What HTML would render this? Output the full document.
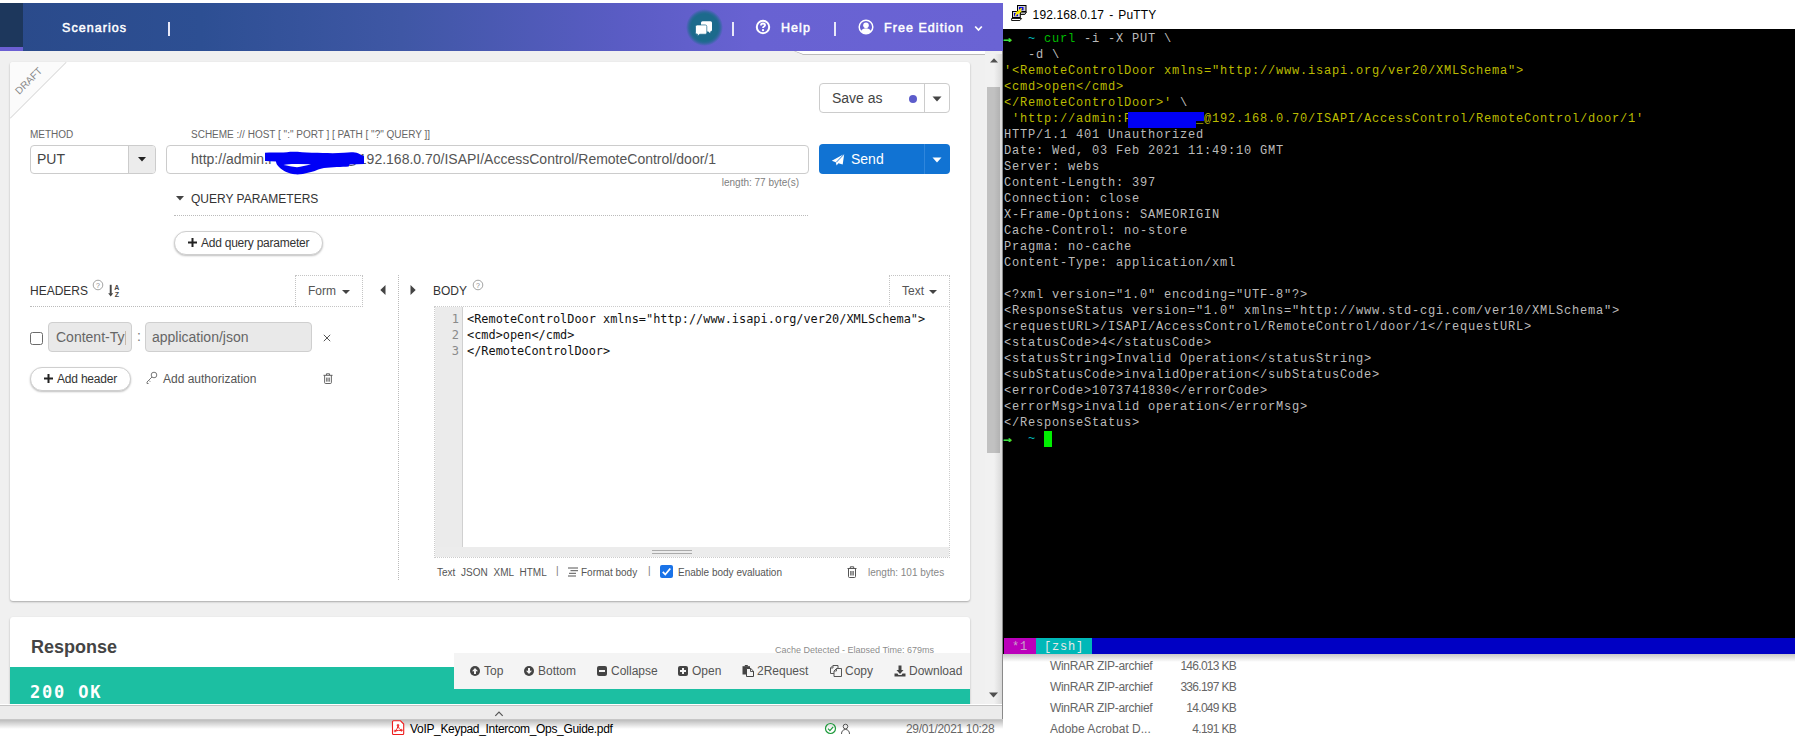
<!DOCTYPE html>
<html lang="en">
<head>
<meta charset="utf-8">
<title>192.168.0.17 - PuTTY</title>
<style>
*{box-sizing:border-box;margin:0;padding:0}
html,body{width:1795px;height:738px;overflow:hidden;background:#fff}
body{position:relative;font-family:"Liberation Sans",Arial,sans-serif;color:#333}
.abs{position:absolute}
.t{position:absolute;white-space:nowrap;line-height:1}
/* ---------- browser window (left) ---------- */
#win{position:absolute;left:0;top:0;width:1003px;height:704px;background:#f0f0f0;overflow:hidden}
#hdr{position:absolute;left:0;top:3px;width:1003px;height:48px;background:linear-gradient(90deg,#2a4a8a 0%,#2d4f93 20%,#3f57a5 40%,#5a5cc4 62%,#6862d2 75%,#6a63d4 100%)}
#hdr .dark{position:absolute;left:0;top:0;width:23px;height:44px;background:#1d375c}
#hdr .strip{position:absolute;left:0;top:44px;width:23px;height:4px;background:#6b5fd3}
#hdr .t{color:#fff;font-weight:normal;-webkit-text-stroke:.5px #fff;font-size:12.500px;letter-spacing:1.050px}
.card{position:absolute;background:#fff;border-radius:3px;box-shadow:0 1px 2px rgba(0,0,0,.3)}
.lbl{color:#666;font-size:10px}
.inp{position:absolute;border:1px solid #ccc;border-radius:4px;background:#fff}
.pill{position:absolute;border:1px solid #cfcfcf;border-radius:13px;background:#fff;box-shadow:0 1px 2px rgba(0,0,0,.25)}
.dot-h{position:absolute;height:0;border-top:1px dotted #bbb}
.dot-v{position:absolute;width:0;border-left:1px dotted #bbb}
.mono{font-family:"DejaVu Sans Mono","Liberation Mono",monospace}
/* ---------- putty ---------- */
#putty{position:absolute;left:1003px;top:0;width:792px;height:654px;background:#fff}
#term{position:absolute;left:0;top:29px;width:792px;height:625px;background:#000}
#term pre{position:absolute;left:1px;top:2.3px;font-family:"Liberation Mono","DejaVu Sans Mono",monospace;font-size:12px;letter-spacing:.8px;line-height:16px;color:#bbb;white-space:pre}
.y{color:#bbbb00}.g{color:#00bb00}.c{color:#00bbbb}.bg{color:#3fe03f;font-weight:bold;-webkit-text-stroke:.9px #3fe03f}
/* ---------- explorer ---------- */
.ex{font-family:"Liberation Sans","DejaVu Sans",sans-serif;font-size:12px;color:#666;letter-spacing:-.32px;margin-top:1px}
</style>
</head>
<body>

<!-- ================= file explorer background (bottom) ================= -->
<div class="abs" style="left:0;top:704px;width:1003px;height:16px;background:#ebebeb;border-top:1px solid #fff;border-bottom:1px solid #c6c6c6"></div><div class="abs" style="left:0;top:705px;width:1003px;height:1px;background:#c4c4c4"></div>
<div class="abs" style="left:0;top:720px;width:1003px;height:9px;background:linear-gradient(180deg,rgba(0,0,0,.26),rgba(0,0,0,0))"></div>
<svg class="abs" style="left:494px;top:710px" width="10" height="7" viewBox="0 0 10 7"><path d="M1.3 5.8 L5 2 L8.7 5.8" fill="none" stroke="#555" stroke-width="1.2"/></svg>

<svg class="abs" style="left:391px;top:720px" width="14" height="16" viewBox="0 0 14 16"><path d="M2.5 .8h7l3.2 3.200v9.500a1 1 0 0 1 -1 1h-9.200a1 1 0 0 1 -1-1v-11.700a1 1 0 0 1 1-1z" fill="#fff" stroke="#ee1c1c" stroke-width="1.1"/><path d="M4.3 11c1.600-1.400 2.500-3.700 2.700-5.800.3 2.400 1.700 4.500 3.800 5.200-2.400-.2-4.500 0-6.500.6z" fill="none" stroke="#ee1c1c" stroke-width="1"/><circle cx="7" cy="5.2" r=".9" fill="none" stroke="#ee1c1c" stroke-width=".8"/><circle cx="4" cy="11" r=".9" fill="none" stroke="#ee1c1c" stroke-width=".8"/><circle cx="10.5" cy="10.3" r=".9" fill="none" stroke="#ee1c1c" stroke-width=".8"/></svg>
<div class="t ex" style="left:410px;top:722px;color:#000">VoIP_Keypad_Intercom_Ops_Guide.pdf</div>
<svg class="abs" style="left:824px;top:722px" width="28" height="13" viewBox="0 0 28 13"><circle cx="6.500" cy="6.500" r="5" fill="none" stroke="#1e9a3c" stroke-width="1.2"/><path d="M4 6.700l1.900 1.900 3.300-3.800" fill="none" stroke="#1e9a3c" stroke-width="1.200"/><circle cx="21.500" cy="4.500" r="2.300" fill="none" stroke="#555" stroke-width="1"/><path d="M17.500 12c0-3 1.700-4.500 4-4.500s4 1.500 4 4.500" fill="none" stroke="#555" stroke-width="1"/></svg>
<div class="t ex" style="left:906px;top:722px">29/01/2021 10:28</div>

<div class="abs" style="left:1003px;top:654px;width:792px;height:8px;background:linear-gradient(180deg,rgba(0,0,0,.22),rgba(0,0,0,0))"></div>
<div class="t ex" style="left:1050px;top:659px">WinRAR ZIP-archief</div>
<div class="t ex" style="right:559px;top:659px;letter-spacing:-.71px">146.013 KB</div>
<div class="t ex" style="left:1050px;top:680px">WinRAR ZIP-archief</div>
<div class="t ex" style="right:559px;top:680px;letter-spacing:-.71px">336.197 KB</div>
<div class="t ex" style="left:1050px;top:701px">WinRAR ZIP-archief</div>
<div class="t ex" style="right:559px;top:701px;letter-spacing:-.71px">14.049 KB</div>
<div class="t ex" style="left:1050px;top:722px;letter-spacing:0">Adobe Acrobat D...</div>
<div class="t ex" style="right:559px;top:722px;letter-spacing:-.71px">4.191 KB</div>

<!-- ================= browser window ================= -->
<div id="win">
  <div class="abs" style="left:0;top:0;width:1003px;height:3px;background:#fff"></div>
  <div id="hdr">
    <div class="dark"></div><div class="strip"></div>
    <div class="t" style="left:62px;top:18.700px">Scenarios</div>
    <div class="abs" style="left:168px;top:19px;width:1.500px;height:14px;background:#e8e8f8"></div>
    <div class="abs" style="left:686px;top:6px;width:37px;height:37px;border-radius:50%;background:radial-gradient(circle closest-side,#1c6a8c 0,#1c6a8c 74%,rgba(28,106,140,.75) 84%,rgba(28,106,140,0) 100%)"></div>
    <svg class="abs" style="left:695px;top:17.5px" width="18" height="16" viewBox="0 0 18 15" preserveAspectRatio="none"><path d="M7.500 .2h8a1.500 1.500 0 0 1 1.500 1.500v6.600a1.500 1.500 0 0 1 -1.500 1.500h-.3v1.700l-1.900-1.700H7.500A1.500 1.500 0 0 1 6 8.300V1.700A1.500 1.500 0 0 1 7.500 .2z" fill="#fff"/><path d="M2 3.700h8.300a1.500 1.500 0 0 1 1.500 1.500v5.700a1.500 1.500 0 0 1 -1.500 1.500H4.600L2.600 14.300V12.400H2A1.500 1.500 0 0 1 .5 10.900V5.200A1.500 1.500 0 0 1 2 3.700z" fill="#fff" stroke="#1c6a8c" stroke-width=".7"/></svg>
    <div class="abs" style="left:732px;top:19px;width:1.500px;height:14px;background:#e8e8f8"></div>
    <svg class="abs" style="left:755px;top:16px" width="16" height="16" viewBox="0 0 16 16"><circle cx="8" cy="8" r="6.200" fill="none" stroke="#fff" stroke-width="2"/><path d="M6 6.500c0-1.300.9-2 2-2s2 .7 2 1.700c0 1.300-2 1.300-2 2.700" fill="none" stroke="#fff" stroke-width="1.900"/><circle cx="8" cy="11.200" r="1.150" fill="#fff"/></svg>
    <div class="t" style="left:781px;top:18.700px">Help</div>
    <div class="abs" style="left:834px;top:19px;width:1.500px;height:14px;background:#e8e8f8"></div>
    <svg class="abs" style="left:858px;top:16px" width="16" height="16" viewBox="0 0 16 16"><circle cx="8" cy="8" r="6.800" fill="none" stroke="#fff" stroke-width="1.500"/><circle cx="8" cy="6.300" r="2.800" fill="#fff"/><path d="M2.800 12.500c1-2.500 3-3.300 5.200-3.300s4.200.8 5.200 3.300c-1.500 1.700-3.200 2.300-5.200 2.300s-3.700-.6-5.200-2.300z" fill="#fff"/></svg>
    <div class="t" style="left:884px;top:18.700px">Free Edition</div>
    <svg class="abs" style="left:974px;top:22px" width="9" height="7" viewBox="0 0 9 7"><path d="M1.200 1.500L4.500 5 7.800 1.500" fill="none" stroke="#fff" stroke-width="1.800"/></svg>
  </div>
  <!-- white tab stub below header -->
  <svg class="abs" style="left:794px;top:51px" width="196" height="5" viewBox="0 0 196 5"><path d="M0 0H191V3.800H9z" fill="#aaa"/><path d="M1 0H191V3H9z" fill="#fff"/></svg>

  <!-- scrollbar -->
  <div class="abs" style="left:985px;top:54px;width:17px;height:650px;background:#f1f1f1"></div>
  <div class="abs" style="left:987px;top:87px;width:13px;height:366px;background:#c1c1c1"></div>
  <svg class="abs" style="left:990px;top:58px" width="8" height="5" viewBox="0 0 8 5"><path d="M0 4.500L4 .3 8 4.500z" fill="#505050"/></svg>
  <svg class="abs" style="left:989px;top:692px" width="9" height="6" viewBox="0 0 9 6"><path d="M0 .5L4.500 5.500 9 .5z" fill="#505050"/></svg>

  <!-- ========== request card ========== -->
  <div class="card" style="left:10px;top:62px;width:960px;height:539px;overflow:hidden">
    <!-- DRAFT ribbon -->
    <svg class="abs" style="left:0;top:0" width="60" height="60" viewBox="0 0 60 60"><path d="M0 56 L56 0" stroke="#cfcfcf" stroke-width="1.500" fill="none"/><path d="M0 0H56L0 56z" fill="#fbfbfb"/></svg>
    <div class="t" style="left:-1px;top:14px;width:40px;text-align:center;font-size:10px;color:#888;transform:rotate(-45deg);transform-origin:50% 50%">DRAFT</div>
  </div>

  <!-- Save as -->
  <div class="inp" style="left:819px;top:83px;width:131px;height:30px;border-color:#ccc"></div>
  <div class="abs" style="left:924px;top:83px;width:1px;height:30px;background:#ccc"></div>
  <div class="t" style="left:832px;top:91px;font-size:14px;color:#444">Save as</div>
  <div class="abs" style="left:909px;top:95px;width:8px;height:8px;border-radius:50%;background:#5c5ccb"></div>
  <svg class="abs" style="left:932px;top:96px" width="10" height="6" viewBox="0 0 10 6"><path d="M.5 .5h9L5 5.500z" fill="#444"/></svg>

  <!-- method -->
  <div class="t lbl" style="left:30px;top:129.5px">METHOD</div>
  <div class="inp" style="left:30px;top:145px;width:126px;height:29px"></div>
  <div class="abs" style="left:128px;top:146px;width:27px;height:27px;background:#ececec;border-left:1px solid #ccc;border-radius:0 3px 3px 0"></div>
  <div class="t" style="left:37px;top:152px;font-size:14px;color:#444">PUT</div>
  <svg class="abs" style="left:138px;top:157px" width="8" height="5" viewBox="0 0 8 5"><path d="M0 0h8L4 4.500z" fill="#222"/></svg>

  <!-- URL -->
  <div class="t lbl" style="left:191px;top:129.5px">SCHEME :// HOST [ ":" PORT ] [ PATH [ "?" QUERY ]]</div>
  <div class="inp" style="left:166px;top:145px;width:643px;height:29px"></div>
  <div class="t" style="left:191px;top:152px;font-size:14px;color:#555">http://admin:P</div>
  <div class="t" id="url2" style="left:344.600px;top:152px;font-size:14px;color:#555">@192.168.0.70/ISAPI/AccessControl/RemoteControl/door/1</div>
  <svg class="abs" style="left:260px;top:148px" width="112" height="30" viewBox="0 0 112 30"><path d="M5 4.800 C14 4.200 20 5 27 4.300 C34 3.200 42 4.500 52 4.800 C64 5 74 5.600 84 4.800 C90 3.800 95 4 98 5.200 L104 8.200 L104 16 L89.500 16.400 L88.700 18.600 C82 19 72 19.200 64 20 C58 21 55 23.500 49 24.500 C44 26 39 26.600 35 26.300 C29 25.800 23 23 19 19 C17 17 16 15.500 16 13.600 L5 13z" fill="#0000f6"/><path d="M23.500 17 C28 15.800 34 16 38 16 L51 16.300 C46 17.500 41 18.800 37 19.300 C32 18.600 28 17.800 23.500 17z" fill="#fff"/></svg>

  <!-- Send -->
  <div class="abs" style="left:819px;top:144px;width:131px;height:30px;border-radius:4px;background:#1173d3"></div>
  <div class="abs" style="left:924px;top:144px;width:1px;height:30px;background:#2f86dc"></div>
  <svg class="abs" style="left:831px;top:152px" width="14" height="14" viewBox="0 0 14 14"><path d="M13.200 2L.8 8.700 4.800 10.200 5.600 13.400 7.400 11.200 11.700 12.600z" fill="#fff"/><path d="M13.200 2L5.200 10.400" stroke="#1173d3" stroke-width=".9"/></svg>
  <div class="t" style="left:851px;top:152px;font-size:14px;color:#fff">Send</div>
  <svg class="abs" style="left:932px;top:157px" width="10" height="6" viewBox="0 0 10 6"><path d="M.5 .5h9L5 5.500z" fill="#fff"/></svg>

  <div class="t" style="right:204px;top:178px;font-size:10px;color:#808080">length: 77 byte(s)</div>

  <!-- query parameters -->
  <svg class="abs" style="left:176px;top:196px" width="8" height="5" viewBox="0 0 8 5"><path d="M0 0h8L4 4.500z" fill="#444"/></svg>
  <div class="t" style="left:191px;top:193px;font-size:12px;color:#333">QUERY PARAMETERS</div>
  <div class="dot-h" style="left:174px;top:215px;width:634px"></div>
  <div class="pill" style="left:174px;top:231px;width:149px;height:24px"></div>
  <svg class="abs" style="left:188px;top:238px" width="9" height="9" viewBox="0 0 9 9"><path d="M4.500 0v9M0 4.500h9" stroke="#222" stroke-width="2"/></svg>
  <div class="t" style="left:201px;top:237px;font-size:12px;color:#333;letter-spacing:-.24px">Add query parameter</div>

  <!-- headers -->
  <div class="t" style="left:30px;top:285px;font-size:12px;color:#333">HEADERS</div>
  <svg class="abs" style="left:92px;top:279px" width="12" height="12" viewBox="0 0 12 12"><circle cx="6" cy="6" r="4.800" fill="none" stroke="#999" stroke-width=".9"/><text x="6" y="8.600" font-size="7" text-anchor="middle" fill="#888" font-family="Liberation Sans, sans-serif">?</text></svg>
  <svg class="abs" style="left:108px;top:284px" width="12" height="14" viewBox="0 0 12 14"><path d="M2.700 .8v9" stroke="#444" stroke-width="1.900" fill="none"/><path d="M.2 9.200h5L2.700 12.500z" fill="#444"/><text x="8.800" y="5.800" font-size="7" text-anchor="middle" fill="#444" font-weight="bold" font-family="Liberation Sans, sans-serif">A</text><text x="8.800" y="12.800" font-size="7" text-anchor="middle" fill="#444" font-weight="bold" font-family="Liberation Sans, sans-serif">Z</text></svg>
  <div class="abs" style="left:295px;top:275px;width:68px;height:32px;border:1px dotted #c4c4c4"></div>
  <div class="t" style="left:308px;top:285px;font-size:12px;color:#555">Form</div>
  <svg class="abs" style="left:342px;top:290px" width="8" height="4" viewBox="0 0 8 4"><path d="M0 0h8L4 4z" fill="#444"/></svg>
  <div class="dot-h" style="left:30px;top:306px;width:266px"></div>

  <div class="abs" style="left:30px;top:332px;width:13px;height:13px;border:1px solid #6b6b6b;border-radius:2.500px;background:#fff"></div>
  <div class="inp" style="left:48px;top:322px;width:84px;height:30px;background:#e9e9e9;border-color:#cfcfcf"></div>
  <div class="t" style="left:56px;top:330px;font-size:14px;color:#666">Content-Ty</div>
  <div class="abs" style="left:125px;top:331px;width:1px;height:14px;background:#c9b9a9"></div>
  <div class="t" style="left:137px;top:329px;font-size:14px;color:#777">:</div>
  <div class="inp" style="left:145px;top:322px;width:167px;height:30px;background:#e9e9e9;border-color:#cfcfcf"></div>
  <div class="t" style="left:152px;top:330px;font-size:14px;color:#666">application/json</div>
  <svg class="abs" style="left:323px;top:334px" width="8" height="8" viewBox="0 0 8 8"><path d="M.8 .8l6.400 6.400M7.200 .8L.8 7.200" stroke="#555" stroke-width="1"/></svg>

  <div class="pill" style="left:30px;top:367px;width:101px;height:24px"></div>
  <svg class="abs" style="left:44px;top:374px" width="9" height="9" viewBox="0 0 9 9"><path d="M4.500 0v9M0 4.500h9" stroke="#222" stroke-width="2"/></svg>
  <div class="t" style="left:57px;top:373px;font-size:12px;color:#333;letter-spacing:-.2px">Add header</div>
  <svg class="abs" style="left:146px;top:371px" width="12" height="13" viewBox="0 0 12 13"><circle cx="8" cy="4" r="2.800" fill="none" stroke="#777" stroke-width="1"/><path d="M6 6L1 11v1.500h1.500M3 9.500l1.200 1.200" fill="none" stroke="#777" stroke-width="1"/></svg>
  <div class="t" style="left:163px;top:373px;font-size:12px;color:#555">Add authorization</div>
  <svg class="abs" style="left:322.5px;top:373px" width="10" height="11" viewBox="0 0 11 12"><path d="M.5 2.500h10M3.800 2.300V.8h3.400v1.500M1.800 2.500v8a1 1 0 0 0 1 1h5.400a1 1 0 0 0 1-1v-8" fill="none" stroke="#555" stroke-width="1"/><path d="M4 5v4.500M5.500 5v4.500M7 5v4.500" stroke="#555" stroke-width=".9"/></svg>

  <!-- splitter -->
  <svg class="abs" style="left:380px;top:285px" width="6" height="10" viewBox="0 0 6 10"><path d="M5.500 0v10L.3 5z" fill="#444"/></svg>
  <div class="dot-v" style="left:398px;top:275px;height:305px"></div>
  <svg class="abs" style="left:410px;top:285px" width="6" height="10" viewBox="0 0 6 10"><path d="M.5 0v10L5.700 5z" fill="#444"/></svg>

  <!-- body -->
  <div class="t" style="left:433px;top:285px;font-size:12px;color:#333">BODY</div>
  <svg class="abs" style="left:472px;top:279px" width="12" height="12" viewBox="0 0 12 12"><circle cx="6" cy="6" r="4.800" fill="none" stroke="#999" stroke-width=".9"/><text x="6" y="8.600" font-size="7" text-anchor="middle" fill="#888" font-family="Liberation Sans, sans-serif">?</text></svg>
  <div class="abs" style="left:889px;top:275px;width:61px;height:32px;border:1px dotted #c4c4c4"></div>
  <div class="t" style="left:902px;top:285px;font-size:12px;color:#555">Text</div>
  <svg class="abs" style="left:929px;top:290px" width="8" height="4" viewBox="0 0 8 4"><path d="M0 0h8L4 4z" fill="#444"/></svg>

  <div class="abs" style="left:434px;top:306px;width:516px;height:252px;background:#fff;border:1px dotted #ccc"></div>
  <div class="abs" style="left:435px;top:307px;width:28px;height:240px;background:#ebebeb;border-right:1px solid #d0d0d0"></div>
  <div class="abs" style="left:435px;top:547px;width:514px;height:10px;background:#ececec"></div>
  <div class="abs" style="left:652px;top:550px;width:40px;height:1px;background:#aaa"></div>
  <div class="abs" style="left:652px;top:553px;width:40px;height:1px;background:#aaa"></div>
  <pre class="abs mono" style="left:435px;top:311px;width:24px;text-align:right;font-size:12px;line-height:16px;color:#8a8a8a">1
2
3</pre>
  <pre class="abs mono" style="left:467px;top:311px;font-size:11.900px;line-height:16px;color:#111">&lt;RemoteControlDoor xmlns="http://www.isapi.org/ver20/XMLSchema"&gt;
&lt;cmd&gt;open&lt;/cmd&gt;
&lt;/RemoteControlDoor&gt;</pre>

  <!-- body footer -->
  <div class="t" style="left:437px;top:567.5px;font-size:10px;color:#555;word-spacing:3px">Text JSON XML HTML</div>
  <div class="t" style="left:556px;top:566px;font-size:10px;color:#777">|</div>
  <svg class="abs" style="left:568px;top:567px" width="10" height="10" viewBox="0 0 10 10"><path d="M0 1h10M2.500 3.700h7.500M1 6.300h7M0 9h8" stroke="#555" stroke-width="1"/></svg>
  <div class="t" style="left:581px;top:567.5px;font-size:10px;color:#555">Format body</div>
  <div class="t" style="left:648px;top:566px;font-size:10px;color:#777">|</div>
  <div class="abs" style="left:660px;top:565px;width:13px;height:13px;border-radius:2px;background:#1a73e8"></div>
  <svg class="abs" style="left:660px;top:565px" width="13" height="13" viewBox="0 0 13 13"><path d="M2.800 6.800l2.500 2.700 5-6" fill="none" stroke="#fff" stroke-width="1.800"/></svg>
  <div class="t" style="left:678px;top:567.5px;font-size:10px;color:#555">Enable body evaluation</div>
  <svg class="abs" style="left:847px;top:566px" width="10" height="12" viewBox="0 0 10 12"><path d="M.5 2.500h9M3.300 2.300V.8h3.400v1.500M1.500 2.500v8a1 1 0 0 0 1 1h5a1 1 0 0 0 1-1v-8" fill="none" stroke="#555" stroke-width="1"/><path d="M3.700 5v4.500M5 5v4.500M6.300 5v4.500" stroke="#555" stroke-width=".9"/></svg>
  <div class="t" style="left:868px;top:567.5px;font-size:10px;color:#888">length: 101 bytes</div>

  <!-- ========== response card ========== -->
  <div class="card" style="left:10px;top:617px;width:960px;height:101px"></div>
  <div class="t" style="left:31px;top:638px;font-size:18px;font-weight:bold;color:#444">Response</div>
  <div class="t" style="left:775px;top:646px;font-size:9px;color:#8c8c8c">Cache Detected - Elapsed Time: 679ms</div>
  <div class="abs" style="left:10px;top:667px;width:960px;height:37px;background:#1cbfa2"></div>
  <div class="t mono" style="left:30px;top:684px;font-size:17px;font-weight:bold;color:#fff;letter-spacing:1.800px">200 OK</div>

  <!-- toolbar -->
  <div class="abs" style="left:454px;top:653px;width:516px;height:36px;background:#f4f4f4"></div>
  <div id="tb" style="font-size:12px;color:#555">
    <svg class="abs" style="left:470px;top:666px" width="10" height="10" viewBox="0 0 10 10"><circle cx="5" cy="5" r="5" fill="#444"/><path d="M5 2L2 5.200h2V8h2V5.200h2z" fill="#f4f4f4"/></svg>
    <div class="t" style="left:484px;top:665px">Top</div>
    <svg class="abs" style="left:524px;top:666px" width="10" height="10" viewBox="0 0 10 10"><circle cx="5" cy="5" r="5" fill="#444"/><path d="M5 8L2 4.800h2V2h2v2.800h2z" fill="#f4f4f4"/></svg>
    <div class="t" style="left:538px;top:665px">Bottom</div>
    <svg class="abs" style="left:597px;top:666px" width="10" height="10" viewBox="0 0 10 10"><rect x="0" y="0" width="10" height="10" rx="2" fill="#444"/><path d="M2 5h6" stroke="#f4f4f4" stroke-width="2"/></svg>
    <div class="t" style="left:611px;top:665px">Collapse</div>
    <svg class="abs" style="left:678px;top:666px" width="10" height="10" viewBox="0 0 10 10"><rect x="0" y="0" width="10" height="10" rx="2" fill="#444"/><path d="M2 5h6M5 2v6" stroke="#f4f4f4" stroke-width="2"/></svg>
    <div class="t" style="left:692px;top:665px">Open</div>
    <svg class="abs" style="left:742px;top:665px" width="12" height="12" viewBox="0 0 12 12"><path d="M.5 1.200h7.500v8.300H.5z" fill="#444"/><path d="M2.800 0h3v1.500h-3z" fill="#444"/><path d="M4.500 3.500h4.300l2.700 2.700v5.300h-7z" fill="#f4f4f4" stroke="#444" stroke-width="1"/><path d="M8.500 3.500v3h3" fill="none" stroke="#444" stroke-width=".9"/></svg>
    <div class="t" style="left:757px;top:665px">2Request</div>
    <svg class="abs" style="left:830px;top:665px" width="12" height="12" viewBox="0 0 12 12"><path d="M3 .5h5v8H.5V3z" fill="#f4f4f4" stroke="#555" stroke-width="1"/><path d="M3 .5v2.500H.5" fill="none" stroke="#555" stroke-width=".9"/><path d="M6.500 3.500h5v8h-7.500V6z" fill="#f4f4f4" stroke="#555" stroke-width="1"/><path d="M6.500 3.500V6H4" fill="none" stroke="#555" stroke-width=".9"/></svg>
    <div class="t" style="left:845px;top:665px">Copy</div>
    <svg class="abs" style="left:894px;top:665px" width="12" height="12" viewBox="0 0 12 12"><path d="M6 9L2.500 5h2V.5h3V5h2z" fill="#444"/><path d="M.5 8.500h3l1 1.500h3l1-1.500h3V11.500H.5z" fill="#444"/></svg>
    <div class="t" style="left:909px;top:665px">Download</div>
  </div>
</div>
<div class="abs" style="left:994px;top:54px;width:8px;height:650px;background:linear-gradient(90deg,rgba(0,0,0,0),rgba(0,0,0,.1))"></div>
<!-- window right edge -->
<div class="abs" style="left:1002px;top:51px;width:1px;height:668px;background:#8a8a8a"></div>

<!-- ================= PuTTY ================= -->
<div id="putty">
  <svg class="abs" style="left:8px;top:5px" width="16" height="16" viewBox="0 0 16 16">
    <rect x="6.500" y=".5" width="8.500" height="6" fill="#cfcfcf" stroke="#000" stroke-width="1"/><rect x="8" y="2" width="4.500" height="3.200" fill="#0000e6"/>
    <path d="M9.500 7h6l-1.700 2.500H9.500z" fill="#bdbdbd" stroke="#000" stroke-width=".9"/>
    <rect x="1.500" y="6.500" width="7.800" height="6" fill="#cfcfcf" stroke="#000" stroke-width="1"/><rect x="3" y="8" width="4" height="3.200" fill="#0000e6"/>
    <path d="M.6 13.500h10l-1.700 2H.6z" fill="#fff" stroke="#000" stroke-width=".9"/>
    <path d="M10.800 3.200L8.500 5.500 9.500 6.500 6.500 8.500 5.800 7.800 4.300 10.800" fill="none" stroke="#ffee00" stroke-width="1.600"/><path d="M6 6.200h3.200l-1.200 2.300H5.200z" fill="#ffee00"/>
  </svg>
  <div class="t" style="left:29.600px;top:9px;font-size:12px;color:#000;letter-spacing:.12px;word-spacing:1.600px">192.168.0.17 - PuTTY</div>
  <div id="term">
<pre><span class="bg">&#x2192;</span>  <span class="c">~</span> <span class="g">curl</span> -i -X PUT \
   -d \
<span class="y">'&lt;RemoteControlDoor xmlns="http://www.isapi.org/ver20/XMLSchema"&gt;</span>
<span class="y">&lt;cmd&gt;open&lt;/cmd&gt;</span>
<span class="y">&lt;/RemoteControlDoor&gt;'</span> \
 <span class="y">'http://admin:P        _@192.168.0.70/ISAPI/AccessControl/RemoteControl/door/1'</span>
HTTP/1.1 401 Unauthorized
Date: Wed, 03 Feb 2021 11:49:10 GMT
Server: webs
Content-Length: 397
Connection: close
X-Frame-Options: SAMEORIGIN
Cache-Control: no-store
Pragma: no-cache
Content-Type: application/xml

&lt;?xml version="1.0" encoding="UTF-8"?&gt;
&lt;ResponseStatus version="1.0" xmlns="http://www.std-cgi.com/ver10/XMLSchema"&gt;
&lt;requestURL&gt;/ISAPI/AccessControl/RemoteControl/door/1&lt;/requestURL&gt;
&lt;statusCode&gt;4&lt;/statusCode&gt;
&lt;statusString&gt;Invalid Operation&lt;/statusString&gt;
&lt;subStatusCode&gt;invalidOperation&lt;/subStatusCode&gt;
&lt;errorCode&gt;1073741830&lt;/errorCode&gt;
&lt;errorMsg&gt;invalid operation&lt;/errorMsg&gt;
&lt;/ResponseStatus&gt;
<span class="bg">&#x2192;</span>  <span class="c">~</span> </pre>
    <div class="abs" style="left:125px;top:83px;width:76px;height:9px;background:#0000f6"></div><div class="abs" style="left:125px;top:91px;width:68px;height:8px;background:#0000f6"></div>
    <div class="abs" style="left:41px;top:402px;width:8px;height:16px;background:#00ee00"></div>
    <div class="abs" style="left:1px;top:609px;width:791px;height:16px;background:#0000c4"></div>
    <div class="abs" style="left:1px;top:609px;width:32px;height:16px;background:#bb00bb"></div>
    <div class="abs" style="left:33px;top:609px;width:56px;height:16px;background:#00b8b8"></div>
    <pre style="top:610px;left:1px;color:#e8e8e8"><span style="color:#c9a0c9"> *1 </span> [zsh] </pre>
  </div>
</div>

</body>
</html>
